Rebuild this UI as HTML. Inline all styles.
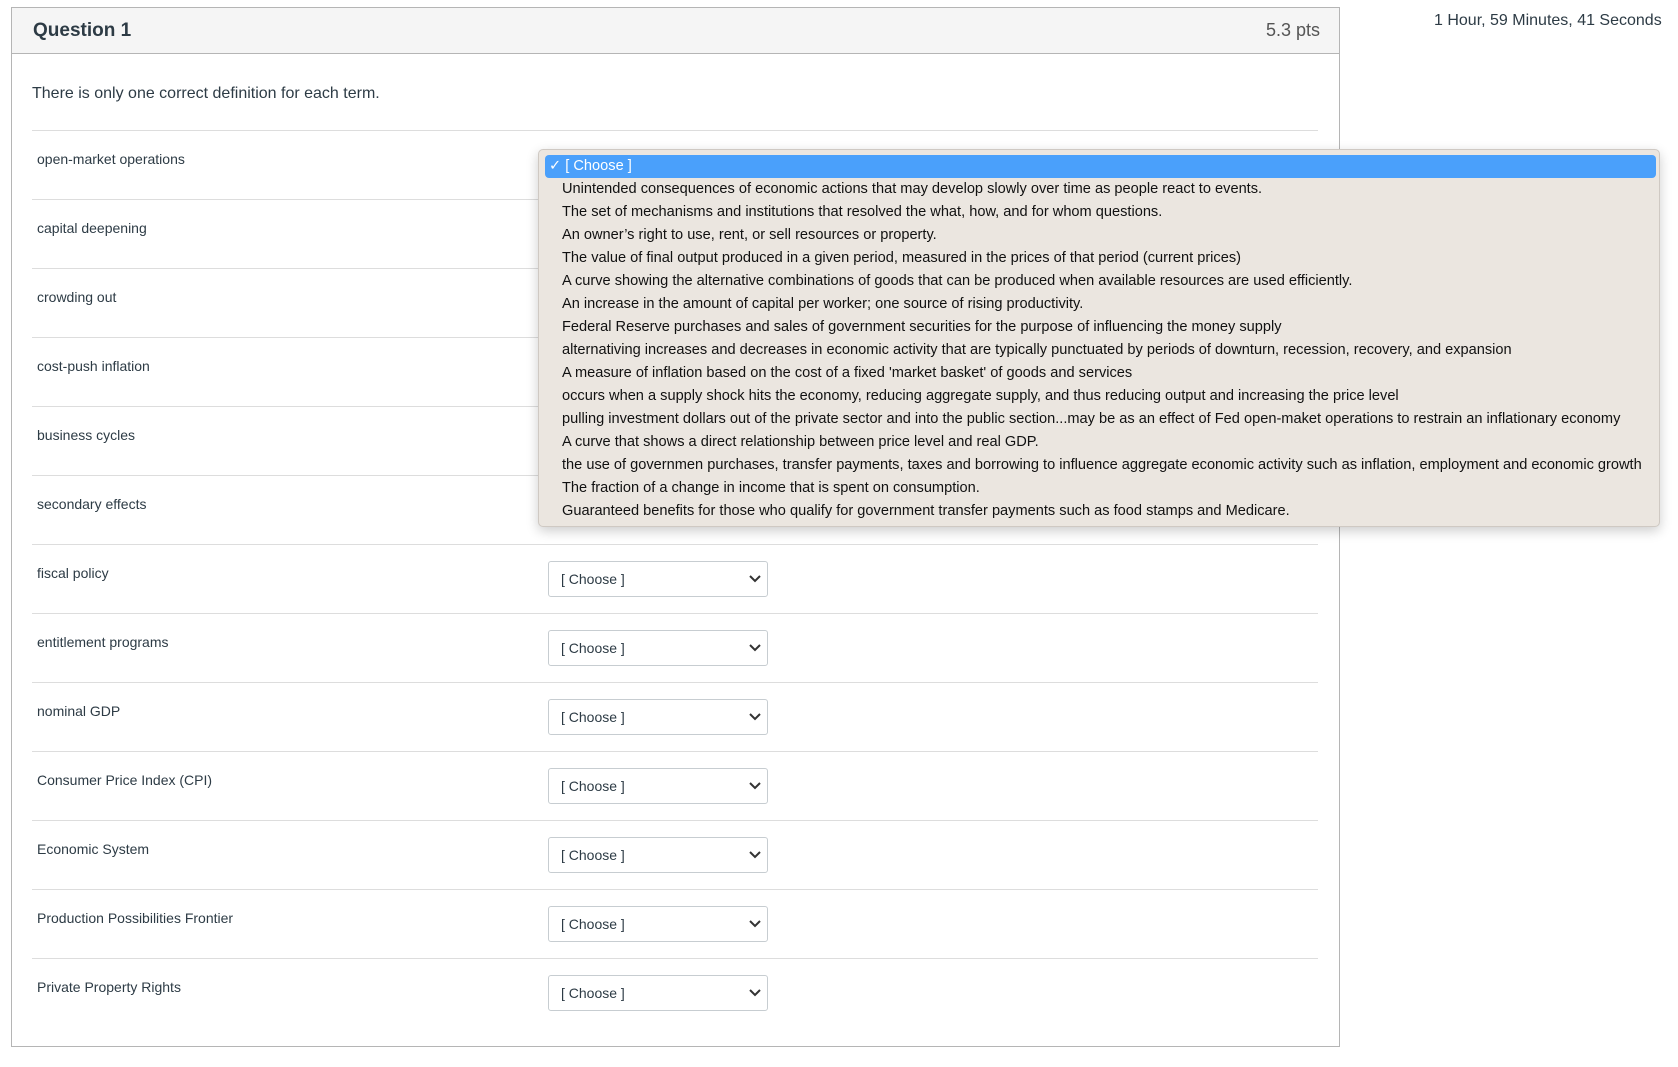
<!DOCTYPE html><html><head><style>
body{margin:0;width:1678px;height:1067px;background:#fff;font-family:"Liberation Sans",sans-serif;color:#2d3b45;position:relative;overflow:hidden}
.box{position:absolute;left:11px;top:7px;width:1329px;height:1040px;border:1px solid #b5b5b5;box-sizing:border-box}
.hdr{height:45px;background:#f5f5f5;border-bottom:1px solid #b5b5b5;position:relative}
.q{position:absolute;left:21px;top:12px;font-size:19px;font-weight:bold;color:#2d3b45}
.pts{position:absolute;right:19px;top:12px;font-size:18px;color:#555}
.intro{position:absolute;left:32px;top:85px;font-size:16px}
.sep{position:absolute;left:32px;width:1286px;height:1px;background:#ddd}
.lbl{position:absolute;left:37px;font-size:14px}
.sel{position:absolute;left:548px;width:220px;height:36px;border:1px solid #c7cdd1;border-radius:3px;box-sizing:border-box;font-size:14px;line-height:34px;padding-left:12px}
.sel svg{position:absolute;right:6px;top:13px}
.timer{position:absolute;left:1434px;top:12px;font-size:16px;color:#2d3b45}
.dd{position:absolute;left:538px;top:149px;width:1122px;height:378px;background:#ebe6e0;border:1px solid #cfc9c3;border-radius:5px;box-shadow:0 4px 12px rgba(0,0,0,.2);box-sizing:border-box}
.hl{position:absolute;left:6px;top:5px;width:1111px;height:23px;background:#4aa0fb;border-radius:4px;color:#fff;font-size:14.6px;line-height:23px;padding-left:4px;box-sizing:border-box}
.it{position:absolute;left:23px;font-size:14.6px;color:#111;line-height:23px;white-space:nowrap}
</style></head><body>
<div class="timer">1 Hour, 59 Minutes, 41 Seconds</div>
<div class="box"><div class="hdr"><div class="q">Question 1</div><div class="pts">5.3 pts</div></div></div>
<div class="intro">There is only one correct definition for each term.</div>
<div class="sep" style="top:130px"></div>
<div class="lbl" style="top:151px">open-market operations</div>
<div class="sep" style="top:199px"></div>
<div class="lbl" style="top:220px">capital deepening</div>
<div class="sep" style="top:268px"></div>
<div class="lbl" style="top:289px">crowding out</div>
<div class="sep" style="top:337px"></div>
<div class="lbl" style="top:358px">cost-push inflation</div>
<div class="sep" style="top:406px"></div>
<div class="lbl" style="top:427px">business cycles</div>
<div class="sep" style="top:475px"></div>
<div class="lbl" style="top:496px">secondary effects</div>
<div class="sep" style="top:544px"></div>
<div class="lbl" style="top:565px">fiscal policy</div>
<div class="sel" style="top:561px">[ Choose ]<svg width="12" height="8"><path d="M1 1l5 5 5-5" stroke="#333" stroke-width="2" fill="none"/></svg></div>
<div class="sep" style="top:613px"></div>
<div class="lbl" style="top:634px">entitlement programs</div>
<div class="sel" style="top:630px">[ Choose ]<svg width="12" height="8"><path d="M1 1l5 5 5-5" stroke="#333" stroke-width="2" fill="none"/></svg></div>
<div class="sep" style="top:682px"></div>
<div class="lbl" style="top:703px">nominal GDP</div>
<div class="sel" style="top:699px">[ Choose ]<svg width="12" height="8"><path d="M1 1l5 5 5-5" stroke="#333" stroke-width="2" fill="none"/></svg></div>
<div class="sep" style="top:751px"></div>
<div class="lbl" style="top:772px">Consumer Price Index (CPI)</div>
<div class="sel" style="top:768px">[ Choose ]<svg width="12" height="8"><path d="M1 1l5 5 5-5" stroke="#333" stroke-width="2" fill="none"/></svg></div>
<div class="sep" style="top:820px"></div>
<div class="lbl" style="top:841px">Economic System</div>
<div class="sel" style="top:837px">[ Choose ]<svg width="12" height="8"><path d="M1 1l5 5 5-5" stroke="#333" stroke-width="2" fill="none"/></svg></div>
<div class="sep" style="top:889px"></div>
<div class="lbl" style="top:910px">Production Possibilities Frontier</div>
<div class="sel" style="top:906px">[ Choose ]<svg width="12" height="8"><path d="M1 1l5 5 5-5" stroke="#333" stroke-width="2" fill="none"/></svg></div>
<div class="sep" style="top:958px"></div>
<div class="lbl" style="top:979px">Private Property Rights</div>
<div class="sel" style="top:975px">[ Choose ]<svg width="12" height="8"><path d="M1 1l5 5 5-5" stroke="#333" stroke-width="2" fill="none"/></svg></div>
<div class="dd">
<div class="hl">✓ [ Choose ]</div>
<div class="it" style="top:28px">Unintended consequences of economic actions that may develop slowly over time as people react to events.</div>
<div class="it" style="top:51px">The set of mechanisms and institutions that resolved the what, how, and for whom questions.</div>
<div class="it" style="top:74px">An owner’s right to use, rent, or sell resources or property.</div>
<div class="it" style="top:97px">The value of final output produced in a given period, measured in the prices of that period (current prices)</div>
<div class="it" style="top:120px">A curve showing the alternative combinations of goods that can be produced when available resources are used efficiently.</div>
<div class="it" style="top:143px">An increase in the amount of capital per worker; one source of rising productivity.</div>
<div class="it" style="top:166px">Federal Reserve purchases and sales of government securities for the purpose of influencing the money supply</div>
<div class="it" style="top:189px">alternativing increases and decreases in economic activity that are typically punctuated by periods of downturn, recession, recovery, and expansion</div>
<div class="it" style="top:212px">A measure of inflation based on the cost of a fixed 'market basket' of goods and services</div>
<div class="it" style="top:235px">occurs when a supply shock hits the economy, reducing aggregate supply, and thus reducing output and increasing the price level</div>
<div class="it" style="top:258px">pulling investment dollars out of the private sector and into the public section...may be as an effect of Fed open-maket operations to restrain an inflationary economy</div>
<div class="it" style="top:281px">A curve that shows a direct relationship between price level and real GDP.</div>
<div class="it" style="top:304px">the use of governmen purchases, transfer payments, taxes and borrowing to influence aggregate economic activity such as inflation, employment and economic growth</div>
<div class="it" style="top:327px">The fraction of a change in income that is spent on consumption.</div>
<div class="it" style="top:350px">Guaranteed benefits for those who qualify for government transfer payments such as food stamps and Medicare.</div>
</div>
</body></html>
